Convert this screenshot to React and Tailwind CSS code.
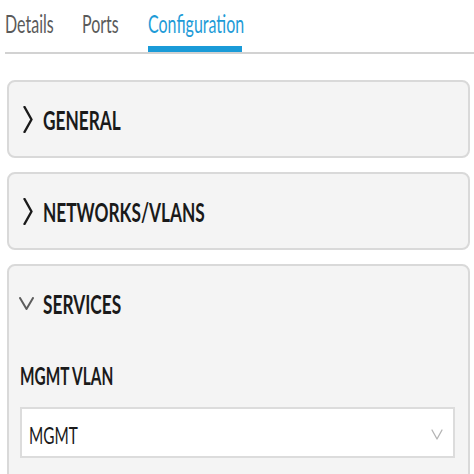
import React from 'react';

// the reference text is horizontally squeezed, so each label is scaled on x
const Sq = ({ children, className = '' }) => (
  <span className={`inline-block origin-left scale-x-[0.64] whitespace-nowrap ${className}`}>{children}</span>
);

const ChevronRight = () => (
  <svg width="10" height="27" viewBox="0 0 10 27" className="shrink-0">
    <polyline points="1.5,1 8.5,13.5 1.5,26" fill="none" stroke="#1a1a1a" strokeWidth="2.4" strokeLinecap="round" strokeLinejoin="round" />
  </svg>
);

const ChevronDown = ({ color = '#555', w = 13, h = 9, sw = 1.6 }) => (
  <svg width={w} height={h} viewBox={`0 0 ${w} ${h}`} className="shrink-0">
    <polyline points={`1,1 ${w / 2},${h - 1} ${w - 1},1`} fill="none" stroke={color} strokeWidth={sw} strokeLinecap="round" strokeLinejoin="round" />
  </svg>
);

const tabs = [
  { label: 'Details', width: 'w-[77px]' },
  { label: 'Ports', width: 'w-[66px]' },
  { label: 'Configuration', width: 'w-[94px]', active: true },
];

const Section = ({ title }) => (
  <div className="h-[78px] rounded-[8px] border-2 border-[#d9d9d9] bg-[#f4f4f4] flex items-center pl-[14px]">
    <ChevronRight />
    <div className="ml-[10px] text-[27px] leading-none font-bold text-[#1a1a1a]">
      <Sq>{title}</Sq>
    </div>
  </div>
);

export default function App() {
  return (
    <div className="w-[474px] h-[474px] overflow-hidden bg-white font-['Lato',sans-serif]">
      {/* tab bar */}
      <div className="ml-[5px] h-[54px] border-b-2 border-[#d2d2d2] flex">
        {tabs.map((t) => (
          <div key={t.label} className={`${t.width} h-full flex flex-col pt-[8px]`}>
            <div className={`text-[25px] leading-[30px] ${t.active ? 'text-[#1e9bd7]' : 'text-[#5a5a5a]'}`}>
              <Sq>{t.label}</Sq>
            </div>
            {t.active && <div className="mt-auto h-[6px] bg-[#1a9bd8]" />}
          </div>
        ))}
      </div>

      {/* accordion */}
      <div className="ml-[7px] mr-[4px] mt-[26px] flex flex-col gap-[14px]">
        <Section title="GENERAL" />
        <Section title="NETWORKS/VLANS" />

        <div className="rounded-[8px] border-2 border-[#d9d9d9] bg-[#f4f4f4] pb-10">
          <div className="h-[74px] flex items-center pl-[10px]">
            <ChevronDown color="#5c5c5c" w={15} h={13} sw={2} />
            <div className="ml-[9px] text-[27px] leading-none font-bold text-[#1a1a1a]">
              <Sq>SERVICES</Sq>
            </div>
          </div>
          <div className="pl-[11px] pr-[13px]">
            <div className="mt-[24px] text-[24px] leading-none font-bold text-[#1a1a1a]">
              <Sq className="scale-x-[0.62]">MGMT VLAN</Sq>
            </div>
            <div className="mt-[19px] h-[51px] border-2 border-[#dcdcdc] bg-white flex items-center justify-between pl-[7px] pr-[10px]">
              <div className="pt-[4px] text-[24px] leading-none text-[#1a1a1a]">
                <Sq>MGMT</Sq>
              </div>
              <div className="pt-[4px]">
                <ChevronDown color="#b4b4b4" w={12} h={11} sw={1.3} />
              </div>
            </div>
          </div>
        </div>
      </div>
    </div>
  );
}
